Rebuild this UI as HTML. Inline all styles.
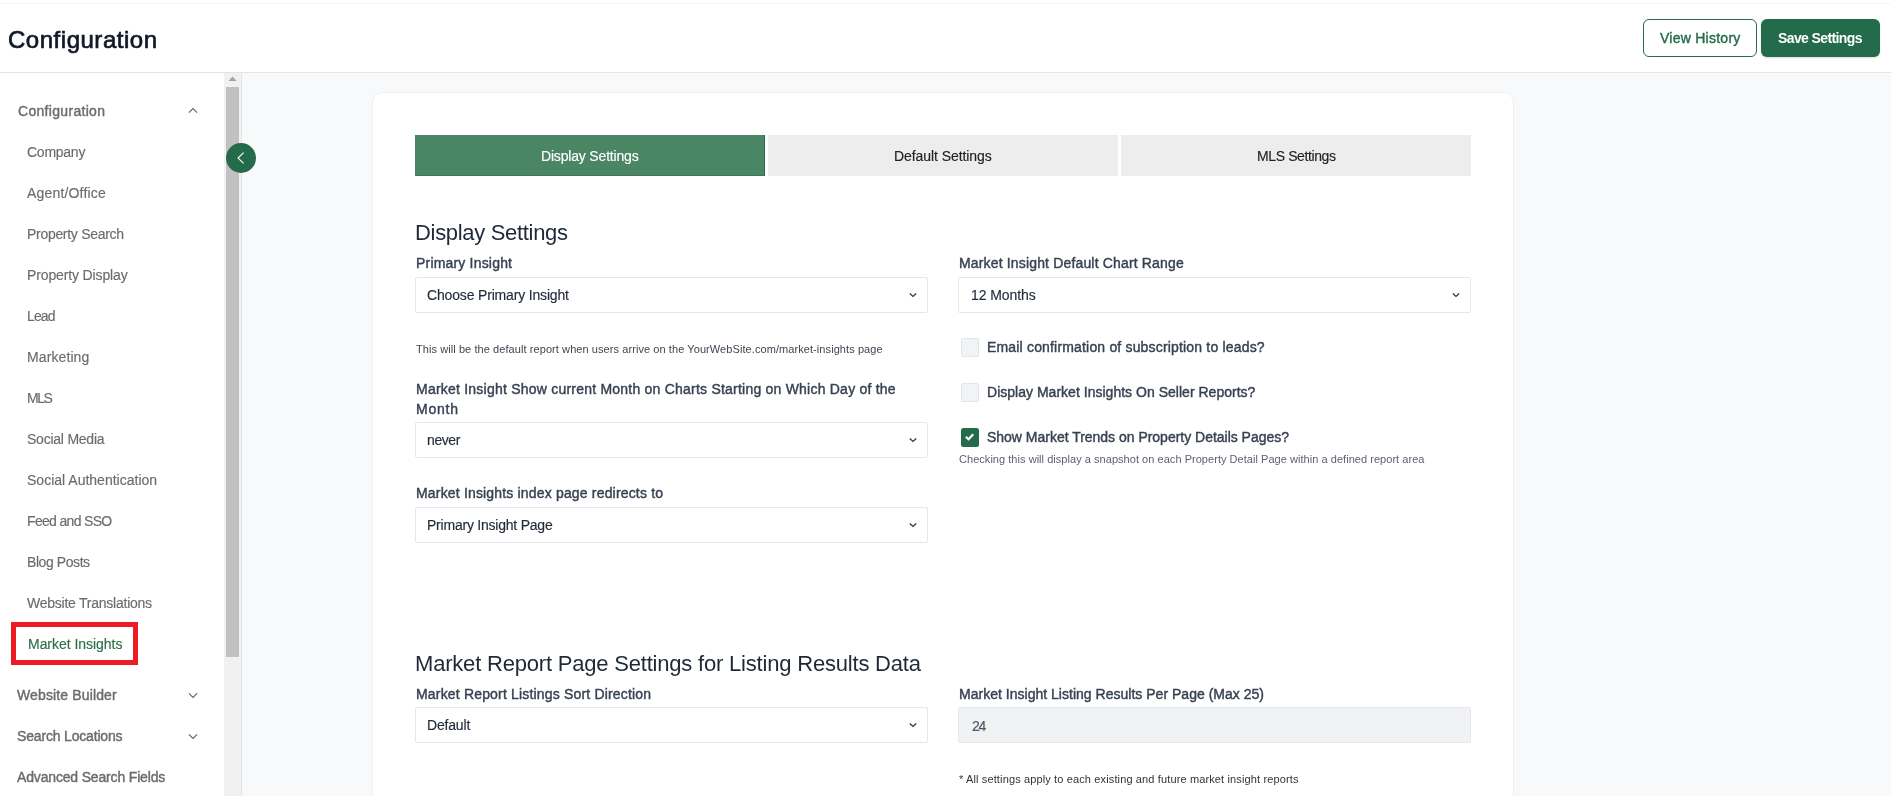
<!DOCTYPE html>
<html><head><meta charset="utf-8">
<style>
*{margin:0;padding:0;box-sizing:border-box}
html,body{width:1891px;height:796px;overflow:hidden;background:#fff;font-family:"Liberation Sans",sans-serif}
.a{position:absolute}
.t{position:absolute;white-space:nowrap;line-height:1;will-change:transform}
.sel{position:absolute;background:#fff;border:1px solid #e6e7ea;border-radius:2px}
.chev{position:absolute}
.cb{position:absolute;width:18px;height:19px;background:#f1f3f5;border:1px solid #e3e5e8;border-radius:2px}
</style></head><body>
<div class="a" style="left:0;top:3px;width:1891px;height:1px;background:#f6f6f6"></div>
<div class="a" style="left:0;top:72px;width:1891px;height:1px;background:#e4e4e4"></div>
<!-- sidebar scrollbar -->
<div class="a" style="left:224px;top:73px;width:17px;height:723px;background:#f1f1f1"></div>
<div class="a" style="left:241px;top:73px;width:1px;height:723px;background:#e6e6e6"></div>
<svg class="a" style="left:224px;top:73px" width="17" height="14"><path d="M4.5 8 L8.5 3.6 L12.5 8 Z" fill="#a3a3a3"/></svg>
<div class="a" style="left:226px;top:87px;width:13px;height:570px;background:#c1c1c1"></div>
<!-- main bg -->
<div class="a" style="left:242px;top:73px;width:1649px;height:723px;background:#f8f9fb"></div>
<div class="a" style="left:372px;top:92px;width:1142px;height:720px;background:#fff;border:1px solid #f0f0f0;border-radius:10px"></div>
<!-- tabs -->
<div class="a" style="left:415px;top:135px;width:350px;height:41px;background:#4a8663;box-shadow:inset -1px 0 0 #2e6a49,inset 0 -1px 0 #3f7858"></div>
<div class="a" style="left:768px;top:135px;width:350px;height:41px;background:#ededed"></div>
<div class="a" style="left:1121px;top:135px;width:350px;height:41px;background:#ededed"></div>
<!-- toggle circle -->
<svg class="a" style="left:226px;top:143px" width="30" height="30"><circle cx="15" cy="15" r="15" fill="#236b4b"/><path d="M17.6 9.6 L12 15 L17.6 20.4" stroke="#fff" stroke-width="1.1" fill="none"/></svg>
<!-- header buttons -->
<div class="a" style="left:1643px;top:19px;width:114px;height:38px;border:1.5px solid #236b4b;border-radius:6px;background:#fff"></div>
<div class="a" style="left:1761px;top:19px;width:119px;height:38px;background:#236b4b;border-radius:6px;box-shadow:0 1px 2px rgba(0,0,0,.15)"></div>
<!-- red box -->
<div class="a" style="left:11px;top:622px;width:127px;height:43px;border:5px solid #ed1c24"></div>
<!-- sidebar chevrons -->
<svg class="a" style="left:186px;top:104px" width="14" height="12"><path d="M2.9 8.6 L7 4.6 L11.1 8.6" stroke="#606060" stroke-width="1.1" fill="none"/></svg>
<svg class="a" style="left:186px;top:689px" width="14" height="12"><path d="M2.9 4.4 L7 8.4 L11.1 4.4" stroke="#606060" stroke-width="1.1" fill="none"/></svg>
<svg class="a" style="left:186px;top:730px" width="14" height="12"><path d="M2.9 4.4 L7 8.4 L11.1 4.4" stroke="#606060" stroke-width="1.1" fill="none"/></svg>
<!-- selects -->
<div class="sel" style="left:415px;top:277px;width:513px;height:36px"></div>
<div class="sel" style="left:958px;top:277px;width:513px;height:36px"></div>
<div class="sel" style="left:415px;top:422px;width:513px;height:36px"></div>
<div class="sel" style="left:415px;top:507px;width:513px;height:36px"></div>
<div class="sel" style="left:415px;top:707px;width:513px;height:36px"></div>
<div class="sel" style="left:958px;top:707px;width:513px;height:36px;background:#f1f2f4"></div>
<svg class="a" style="left:906px;top:289px" width="14" height="12"><path d="M3.8 4.4 L7 7.4 L10.2 4.4" stroke="#3a3a3a" stroke-width="1.35" fill="none"/></svg>
<svg class="a" style="left:1449px;top:289px" width="14" height="12"><path d="M3.8 4.4 L7 7.4 L10.2 4.4" stroke="#3a3a3a" stroke-width="1.35" fill="none"/></svg>
<svg class="a" style="left:906px;top:434px" width="14" height="12"><path d="M3.8 4.4 L7 7.4 L10.2 4.4" stroke="#3a3a3a" stroke-width="1.35" fill="none"/></svg>
<svg class="a" style="left:906px;top:519px" width="14" height="12"><path d="M3.8 4.4 L7 7.4 L10.2 4.4" stroke="#3a3a3a" stroke-width="1.35" fill="none"/></svg>
<svg class="a" style="left:906px;top:719px" width="14" height="12"><path d="M3.8 4.4 L7 7.4 L10.2 4.4" stroke="#3a3a3a" stroke-width="1.35" fill="none"/></svg>
<!-- checkboxes -->
<div class="cb" style="left:961px;top:338px"></div>
<div class="cb" style="left:961px;top:383px"></div>
<svg class="a" style="left:961px;top:428px" width="18" height="19"><rect x="0" y="0" width="18" height="19" rx="2.5" fill="#236b4b"/><path d="M4.9 8.9 L7.6 11.3 L12.2 6.2" stroke="#fff" stroke-width="2.2" fill="none"/></svg>
<div class="t" style="left:8.00px;top:27.68px;font-size:24px;color:#111827;-webkit-text-stroke:0.69px #111827;letter-spacing:0.521px;">Configuration</div>
<div class="t" style="left:1660.00px;top:31.15px;font-size:14px;color:#236b4b;-webkit-text-stroke:0.40px #236b4b;letter-spacing:0.250px;">View History</div>
<div class="t" style="left:1778.40px;top:31.15px;font-size:14px;color:#ffffff;font-weight:700;letter-spacing:-0.609px;">Save Settings</div>
<div class="t" style="left:17.60px;top:104.15px;font-size:14px;color:#6b6b6b;-webkit-text-stroke:0.40px #6b6b6b;letter-spacing:0.311px;">Configuration</div>
<div class="t" style="left:27.30px;top:145.15px;font-size:14px;color:#6b6b6b;-webkit-text-stroke:0.15px #6b6b6b;letter-spacing:-0.253px;">Company</div>
<div class="t" style="left:27.30px;top:186.15px;font-size:14px;color:#6b6b6b;-webkit-text-stroke:0.15px #6b6b6b;letter-spacing:0.174px;">Agent/Office</div>
<div class="t" style="left:27.30px;top:227.15px;font-size:14px;color:#6b6b6b;-webkit-text-stroke:0.15px #6b6b6b;letter-spacing:-0.297px;">Property Search</div>
<div class="t" style="left:27.30px;top:268.15px;font-size:14px;color:#6b6b6b;-webkit-text-stroke:0.15px #6b6b6b;letter-spacing:-0.134px;">Property Display</div>
<div class="t" style="left:27.30px;top:309.15px;font-size:14px;color:#6b6b6b;-webkit-text-stroke:0.15px #6b6b6b;letter-spacing:-0.850px;">Lead</div>
<div class="t" style="left:27.30px;top:350.15px;font-size:14px;color:#6b6b6b;-webkit-text-stroke:0.15px #6b6b6b;letter-spacing:0.103px;">Marketing</div>
<div class="t" style="left:27.30px;top:391.15px;font-size:14px;color:#6b6b6b;-webkit-text-stroke:0.15px #6b6b6b;letter-spacing:-1.442px;">MLS</div>
<div class="t" style="left:27.30px;top:432.15px;font-size:14px;color:#6b6b6b;-webkit-text-stroke:0.15px #6b6b6b;letter-spacing:-0.233px;">Social Media</div>
<div class="t" style="left:27.30px;top:473.15px;font-size:14px;color:#6b6b6b;-webkit-text-stroke:0.15px #6b6b6b;letter-spacing:0.006px;">Social Authentication</div>
<div class="t" style="left:27.30px;top:514.15px;font-size:14px;color:#6b6b6b;-webkit-text-stroke:0.15px #6b6b6b;letter-spacing:-0.674px;">Feed and SSO</div>
<div class="t" style="left:27.30px;top:555.15px;font-size:14px;color:#6b6b6b;-webkit-text-stroke:0.15px #6b6b6b;letter-spacing:-0.424px;">Blog Posts</div>
<div class="t" style="left:27.30px;top:596.15px;font-size:14px;color:#6b6b6b;-webkit-text-stroke:0.15px #6b6b6b;letter-spacing:-0.242px;">Website Translations</div>
<div class="t" style="left:27.80px;top:637.15px;font-size:14px;color:#2b6e47;-webkit-text-stroke:0.15px #2b6e47;letter-spacing:-0.037px;">Market Insights</div>
<div class="t" style="left:17.30px;top:688.15px;font-size:14px;color:#6b6b6b;-webkit-text-stroke:0.40px #6b6b6b;letter-spacing:0.136px;">Website Builder</div>
<div class="t" style="left:17.30px;top:729.15px;font-size:14px;color:#6b6b6b;-webkit-text-stroke:0.40px #6b6b6b;letter-spacing:-0.172px;">Search Locations</div>
<div class="t" style="left:17.30px;top:770.15px;font-size:14px;color:#6b6b6b;-webkit-text-stroke:0.40px #6b6b6b;letter-spacing:-0.164px;">Advanced Search Fields</div>
<div class="t" style="left:541.40px;top:149.15px;font-size:14px;color:#ffffff;-webkit-text-stroke:0.15px #ffffff;letter-spacing:-0.179px;">Display Settings</div>
<div class="t" style="left:894.10px;top:149.15px;font-size:14px;color:#222222;-webkit-text-stroke:0.15px #222222;letter-spacing:-0.069px;">Default Settings</div>
<div class="t" style="left:1256.60px;top:149.15px;font-size:14px;color:#222222;-webkit-text-stroke:0.15px #222222;letter-spacing:-0.387px;">MLS Settings</div>
<div class="t" style="left:415.40px;top:222.18px;font-size:22px;color:#1f2937;letter-spacing:-0.316px;">Display Settings</div>
<div class="t" style="left:415.50px;top:256.15px;font-size:14px;color:#374151;-webkit-text-stroke:0.40px #374151;letter-spacing:0.188px;">Primary Insight</div>
<div class="t" style="left:426.90px;top:287.65px;font-size:14px;color:#1f2937;-webkit-text-stroke:0.15px #1f2937;letter-spacing:-0.167px;">Choose Primary Insight</div>
<div class="t" style="left:958.60px;top:256.15px;font-size:14px;color:#374151;-webkit-text-stroke:0.40px #374151;letter-spacing:0.160px;">Market Insight Default Chart Range</div>
<div class="t" style="left:970.60px;top:288.15px;font-size:14px;color:#1f2937;-webkit-text-stroke:0.15px #1f2937;letter-spacing:-0.083px;">12 Months</div>
<div class="t" style="left:416.00px;top:343.69px;font-size:11px;color:#3f4650;letter-spacing:0.076px;">This will be the default report when users arrive on the YourWebSite.com/market-insights page</div>
<div class="t" style="left:987.00px;top:340.15px;font-size:14px;color:#374151;-webkit-text-stroke:0.40px #374151;letter-spacing:0.176px;">Email confirmation of subscription to leads?</div>
<div class="t" style="left:415.50px;top:382.15px;font-size:14px;color:#374151;-webkit-text-stroke:0.40px #374151;letter-spacing:0.223px;">Market Insight Show current Month on Charts Starting on Which Day of the</div>
<div class="t" style="left:415.50px;top:402.15px;font-size:14px;color:#374151;-webkit-text-stroke:0.40px #374151;letter-spacing:0.774px;">Month</div>
<div class="t" style="left:987.00px;top:385.15px;font-size:14px;color:#374151;-webkit-text-stroke:0.40px #374151;letter-spacing:0.018px;">Display Market Insights On Seller Reports?</div>
<div class="t" style="left:427.00px;top:433.15px;font-size:14px;color:#1f2937;-webkit-text-stroke:0.15px #1f2937;letter-spacing:-0.404px;">never</div>
<div class="t" style="left:987.00px;top:430.15px;font-size:14px;color:#374151;-webkit-text-stroke:0.40px #374151;letter-spacing:-0.016px;">Show Market Trends on Property Details Pages?</div>
<div class="t" style="left:958.80px;top:453.69px;font-size:11px;color:#5b6270;letter-spacing:0.040px;">Checking this will display a snapshot on each Property Detail Page within a defined report area</div>
<div class="t" style="left:415.50px;top:485.65px;font-size:14px;color:#374151;-webkit-text-stroke:0.40px #374151;letter-spacing:0.172px;">Market Insights index page redirects to</div>
<div class="t" style="left:426.80px;top:518.35px;font-size:14px;color:#1f2937;-webkit-text-stroke:0.15px #1f2937;letter-spacing:-0.224px;">Primary Insight Page</div>
<div class="t" style="left:415.20px;top:652.88px;font-size:22px;color:#1f2937;letter-spacing:-0.197px;">Market Report Page Settings for Listing Results Data</div>
<div class="t" style="left:415.50px;top:687.15px;font-size:14px;color:#374151;-webkit-text-stroke:0.40px #374151;letter-spacing:0.174px;">Market Report Listings Sort Direction</div>
<div class="t" style="left:958.80px;top:687.15px;font-size:14px;color:#374151;-webkit-text-stroke:0.40px #374151;letter-spacing:0.016px;">Market Insight Listing Results Per Page (Max 25)</div>
<div class="t" style="left:427.30px;top:718.25px;font-size:14px;color:#1f2937;-webkit-text-stroke:0.15px #1f2937;letter-spacing:-0.175px;">Default</div>
<div class="t" style="left:971.90px;top:719.15px;font-size:14px;color:#4b5563;-webkit-text-stroke:0.15px #4b5563;letter-spacing:-1.368px;">24</div>
<div class="t" style="left:958.60px;top:774.19px;font-size:11px;color:#333333;letter-spacing:0.132px;">* All settings apply to each existing and future market insight reports</div>
</body></html>
